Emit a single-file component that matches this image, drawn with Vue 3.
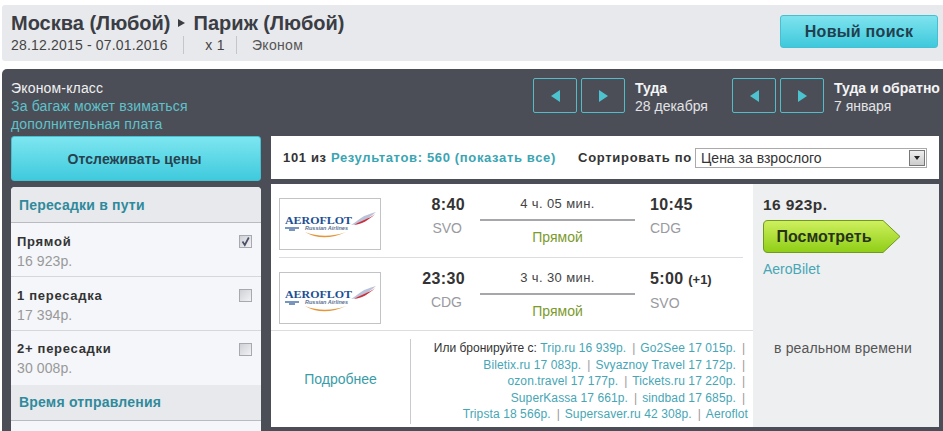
<template>
  <div class="page">
    <header class="topbar">
      <div class="route">
        <div class="route-title">Москва (Любой) <span class="route-arrow"></span> Париж (Любой)</div>
        <div class="route-meta">
          <span class="meta-dates">28.12.2015 - 07.01.2016</span>
          <span class="meta-pax">x 1</span>
          <span class="meta-class">Эконом</span>
        </div>
      </div>
      <button class="new-search">Новый поиск</button>
    </header>

    <section class="panel">
      <div class="panel-head">
        <div class="cabin">
          <div class="cabin-name">Эконом-класс</div>
          <div class="cabin-note">За багаж может взиматься<br>дополнительная плата</div>
        </div>
        <div class="date-nav">
          <div v-for="d in dates" :key="d.label" class="date-group" :class="d.cls">
            <button class="arrow-btn"><span class="tri tri-left"></span></button>
            <button class="arrow-btn"><span class="tri tri-right"></span></button>
            <div class="date-text">
              <b>{{ d.label }}</b>
              <span>{{ d.date }}</span>
            </div>
          </div>
        </div>
      </div>

      <div class="panel-body">
        <aside class="sidebar">
          <button class="track">Отслеживать цены</button>
          <div class="filters">
            <h4 class="filter-title">Пересадки в пути</h4>
            <div v-for="s in stops" :key="s.name" class="stop">
              <div>
                <div class="stop-name">{{ s.name }}</div>
                <div class="stop-price">{{ s.price }}</div>
              </div>
              <span class="check">
                <svg v-if="s.checked" width="11" height="11" viewBox="0 0 11 11">
                  <path d="M2.5 5.5 L4.8 9 L8.8 1.5" fill="none" stroke="#4a4f68" stroke-width="1.7" />
                </svg>
              </span>
            </div>
            <h4 class="filter-title">Время отправления</h4>
          </div>
        </aside>

        <main class="results">
          <div class="sortbar">
            <div class="count">101 из <span class="teal">Результатов: 560 (показать все)</span></div>
            <div class="sort">
              <span class="sort-label">Сортировать по</span>
              <div class="select">
                <span>Цена за взрослого</span>
                <span class="select-btn"><span class="select-tri"></span></span>
              </div>
            </div>
          </div>

          <div class="ticket">
            <div class="ticket-main">
              <div v-for="(f, i) in flights" :key="i" class="flight">
                <div class="logo">
                  <svg width="100" height="50" viewBox="0 0 100 50">
                    <text x="5" y="25" class="logo-word" textLength="67" lengthAdjust="spacingAndGlyphs">AEROFLOT</text>
                    <path d="M71 26 C80 25 88 20 96 13 C90 15 85 16 81 19 C77 22 74 24 71 26 Z" fill="#b9c2d8" />
                    <path d="M74 26 C82 25 89 21 95 15 C89 20 82 21 74 26 Z" fill="#c8303c" />
                    <path d="M5 29 L19 29" stroke="#1d4f91" stroke-width="1.2" />
                    <path d="M9 31 L15 31" stroke="#1d4f91" stroke-width="1.2" />
                    <text x="25" y="31" class="logo-sub" textLength="43" lengthAdjust="spacingAndGlyphs">Russian Airlines</text>
                    <path d="M25 33 C38 38 52 38 66 33 C52 40 36 40 25 33 Z" fill="#e8953a" />
                  </svg>
                </div>
                <div class="point">
                  <div class="time">{{ f.dep }}</div>
                  <div class="code">{{ f.from }}</div>
                </div>
                <div class="leg">
                  <div class="duration">{{ f.duration }}</div>
                  <div class="leg-line"></div>
                  <div class="direct">Прямой</div>
                </div>
                <div class="point point-arr">
                  <div class="time">{{ f.arr }} <small v-if="f.plus">(+1)</small></div>
                  <div class="code">{{ f.to }}</div>
                </div>
              </div>

              <div class="ticket-foot">
                <a class="more">Подробнее</a>
                <div class="others">
                  <div v-for="(line, i) in others" :key="i">
                    <span v-if="i === 0" class="others-lead">Или бронируйте с: </span>
                    <template v-for="(item, j) in line" :key="item">
                      <span class="teal-link">{{ item }}</span>
                      <span v-if="j < line.length - 1" class="pipe">|</span>
                    </template>
                    <span v-if="i < others.length - 1" class="pipe pipe-end">|</span>
                  </div>
                </div>
              </div>
            </div>

            <div class="ticket-side">
              <div class="price">16 923р.</div>
              <button class="view">
                <svg class="view-shape" width="138" height="33" viewBox="0 0 138 33">
                  <defs>
                    <linearGradient id="viewGrad" x1="0" y1="0" x2="0" y2="1">
                      <stop offset="0" stop-color="#cff05f" />
                      <stop offset="1" stop-color="#8fce16" />
                    </linearGradient>
                  </defs>
                  <path d="M5 .5 H120 L137 16.500 L120 32.500 H5 Q.5 32.500 .5 28 V5 Q.5 .5 5 .5 Z" fill="url(#viewGrad)" stroke="#6f9a1e" />
                </svg>
                <span class="view-label">Посмотреть</span>
              </button>
              <a class="agent">AeroBilet</a>
              <div class="realtime">в реальном времени</div>
            </div>
          </div>
        </main>
      </div>
    </section>
  </div>
</template>

<script setup>
const dates = [
  { label: 'Туда', date: '28 декабря', cls: 'date-out' },
  { label: 'Туда и обратно', date: '7 января', cls: 'date-back' },
]

const stops = [
  { name: 'Прямой', price: '16 923р.', checked: true },
  { name: '1 пересадка', price: '17 394р.', checked: false },
  { name: '2+ пересадки', price: '30 008р.', checked: false },
]

const flights = [
  { dep: '8:40', from: 'SVO', duration: '4 ч. 05 мин.', arr: '10:45', to: 'CDG', plus: false },
  { dep: '23:30', from: 'CDG', duration: '3 ч. 30 мин.', arr: '5:00', to: 'SVO', plus: true },
]

const others = [
  ['Trip.ru 16 939р.', 'Go2See 17 015р.'],
  ['Biletix.ru 17 083р.', 'Svyaznoy Travel 17 172р.'],
  ['ozon.travel 17 177р.', 'Tickets.ru 17 220р.'],
  ['SuperKassa 17 661р.', 'sindbad 17 685р.'],
  ['Tripsta 18 566р.', 'Supersaver.ru 42 308р.', 'Aeroflot'],
]
</script>

<style>
html, body { margin: 0; background: #fff; overflow: hidden; }
</style>

<style scoped>
.page {
  width: 943px; height: 431px; overflow: hidden;
  padding: 5px 0 0 2px; box-sizing: border-box;
  font-family: "Liberation Sans", Arial, sans-serif;
  color: #333;
}
button { font-family: inherit; padding: 0; cursor: pointer; }

.topbar {
  height: 56px; background: #e8e9ec; border-radius: 3px 0 0 3px;
  display: flex; justify-content: space-between; align-items: center;
  padding: 0 5px 0 9px;
}
.route-title { font-size: 20px; font-weight: 700; line-height: 23px; color: #3b3d45; }
.route-arrow {
  display: inline-block; vertical-align: 3px; margin: 0 3px 0 2px;
  border-left: 7px solid #3b3d45; border-top: 4px solid transparent; border-bottom: 4px solid transparent;
}
.route-meta { display: flex; font-size: 14px; line-height: 18px; color: #444; margin-top: 1px; }
.meta-dates { width: 172px; border-right: 1px solid #c5c6ca; letter-spacing: .18px; }
.meta-pax { width: 53px; border-right: 1px solid #c5c6ca; text-align: center; box-sizing: border-box; padding-left: 10px; letter-spacing: .3px; }
.meta-class { padding-left: 15px; color: #555; letter-spacing: .3px; }
.new-search {
  width: 158px; height: 33px; margin-top: -3px;
  border: 1px solid #46bfd0; border-radius: 3px;
  background: linear-gradient(#7fe3ee, #3ec9dc);
  color: #223f4e; font-size: 16px; font-weight: 700; letter-spacing: .3px;
}

.panel {
  margin-top: 8px; height: 362px; background: #4c4e57;
  border-radius: 5px 0 0 0;
}
.panel-head { height: 67px; display: flex; justify-content: space-between; }
.cabin { padding: 10px 0 0 9px; font-size: 14px; line-height: 18px; letter-spacing: .17px; }
.cabin-name { color: #f0f0f2; }
.cabin-note { color: #5fc2cb; }
.date-nav { display: flex; padding-top: 9px; }
.date-group { display: flex; }
.date-out { width: 199px; }
.date-back { width: 211px; }
.arrow-btn {
  width: 44px; height: 35px; margin-right: 4px;
  background: transparent; border: 1px solid #52bcc8; border-radius: 2px;
  display: flex; align-items: center; justify-content: center;
}
.tri { border-top: 6px solid transparent; border-bottom: 6px solid transparent; }
.tri-left { border-right: 9px solid #4dc3d0; }
.tri-right { border-left: 9px solid #4dc3d0; }
.date-text { display: flex; flex-direction: column; padding: 1px 0 0 6px; font-size: 14px; line-height: 18px; color: #e2e3e6; white-space: nowrap; }
.date-text b { color: #f4f4f6; }

.panel-body { display: flex; padding-left: 9px; height: 295px; }
.sidebar { width: 250px; flex: none; }
.track {
  display: block; width: 250px; height: 45px;
  border: 1px solid #46bfd0; border-radius: 3px;
  background: linear-gradient(#7de6f0, #3fcadd);
  color: #27424f; font-size: 14px; font-weight: 700; letter-spacing: .1px;
  padding-right: 3px;
}
.filters { margin-top: 6px; background: #f4f6fa; border-radius: 4px 4px 0 0; height: 244px; }
.filter-title {
  margin: 0; height: 35px; line-height: 35px; padding-left: 8px;
  background: #e7e9ec; color: #2f8a9c; font-size: 14px; font-weight: 700;
  border-bottom: 1px solid #b9bbc0; letter-spacing: .2px;
}
.filters .filter-title:first-child { border-radius: 4px 4px 0 0; line-height: 37px; }
.stop {
  height: 53px; border-bottom: 1px solid #d5d7db;
  display: flex; justify-content: space-between; padding: 0 9px 0 6px;
}
.stop:nth-child(4) { border-bottom: 0; height: 54px; }
.stop:nth-child(4) .stop-name { margin-top: 9px; }
.stop-name { font-size: 13px; font-weight: 700; color: #333; margin-top: 10px; line-height: 17px; letter-spacing: .72px; }
.stop-price { font-size: 14px; color: #999; line-height: 19px; margin-top: 2px; letter-spacing: .1px; }
.check {
  width: 11px; height: 11px; margin-top: 12px; border: 1px solid #a8a9b0;
  background: linear-gradient(135deg, #cfd0d6, #f2f2f4); display: block;
}
.check svg { display: block; }

.results { width: 668px; flex: none; margin-left: 10px; }
.sortbar {
  height: 43px; background: #fff; display: flex; align-items: center;
  justify-content: space-between; padding: 0 12px; box-sizing: border-box;
}
.count { font-size: 13px; font-weight: 700; color: #333; letter-spacing: .65px; white-space: nowrap; }
.teal { color: #3aa5b2; }
.sort { display: flex; align-items: center; }
.sort-label { font-size: 13px; font-weight: 700; letter-spacing: .7px; margin-right: 3px; white-space: nowrap; }
.select {
  width: 232px; height: 20px; border: 1px solid #aaa; box-sizing: border-box;
  display: flex; justify-content: space-between; align-items: center;
  font-size: 14px; line-height: 18px; padding-left: 5px; color: #333;
}
.select-btn {
  width: 16px; height: 16px; margin-right: 1px; border: 1px solid #777;
  background: linear-gradient(#eee, #ccc); display: flex; align-items: center; justify-content: center;
  box-sizing: border-box;
}
.select-tri { border-top: 4px solid #222; border-left: 3px solid transparent; border-right: 3px solid transparent; }

.ticket { margin-top: 5px; height: 243px; display: flex; background: #fff; }
.ticket-main { width: 482px; flex: none; }
.flight { height: 73px; display: flex; margin: 0 10px 0 8px; border-bottom: 1px solid #dcdde0; }
.flight:nth-child(2) { height: 72px; margin: 0; padding: 0 10px 0 8px; }
.logo {
  width: 100px; height: 50px; margin: 14px 0 0; border: 1px solid #c2c3c7; flex: none;
}
.logo svg { display: block; }
.logo-word { font-family: "Liberation Serif", serif; font-weight: 700; font-size: 10px; fill: #1c4e93; }
.logo-sub { font-family: "Liberation Sans", sans-serif; font-style: italic; font-weight: 700; font-size: 5.500px; fill: #5b7396; }
.point { width: 84px; text-align: right; flex: none; }
.point .code { padding-right: 3px; }
.point-arr { width: 90px; text-align: left; margin-left: 15px; }
.point-arr .code { padding-right: 0; }
.time { font-size: 16px; font-weight: 700; color: #333; margin-top: 11px; line-height: 19px; letter-spacing: .35px; white-space: nowrap; }
.time small { font-size: 13px; letter-spacing: 0; }
.code { font-size: 14px; color: #9a9a9f; margin-top: 6px; line-height: 17px; }
.leg { width: 155px; margin-left: 15px; text-align: center; flex: none; }
.duration { font-size: 13px; color: #444; margin-top: 11px; line-height: 18px; letter-spacing: .4px; }
.leg-line { height: 2px; background: #a6a7ab; margin-top: 6px; }
.direct { font-size: 14px; color: #7d9a2d; margin-top: 8px; line-height: 17px; }
.ticket-foot { height: 96px; display: flex; }
.more { width: 139px; flex: none; text-align: center; font-size: 14px; color: #3a9ca8; padding-top: 40px; box-sizing: border-box; }
.others {
  flex: 1; margin: 8px 0 0; height: 85px; border-left: 1px solid #c9cacd;
  padding: 1px 5px 0 0; text-align: right; font-size: 12px; line-height: 16.600px; box-sizing: border-box;
  white-space: nowrap;
}
.others-lead { color: #333; }
.teal-link { color: #46a6b5; letter-spacing: .1px; }
.pipe { color: #999; margin: 0 5px 0 6px; }
.pipe-end { margin-right: 3px; }

.ticket-side { flex: 1; background: #eeeff1; padding: 11px 0 0 10px; box-sizing: border-box; }
.price { font-size: 15.500px; font-weight: 700; color: #333; line-height: 20px; letter-spacing: .4px; }
.view { position: relative; display: block; width: 138px; height: 33px; margin-top: 5px; border: 0; background: none; }
.view-shape { position: absolute; left: 0; top: 0; }
.view-label { position: relative; display: block; width: 122px; text-align: center; font-size: 16px; font-weight: 700; color: #28331a; line-height: 33px; }
.agent { display: block; margin-top: 7px; font-size: 14px; line-height: 18px; color: #46a6b5; }
.realtime { margin: 61px 0 0 11px; font-size: 14px; line-height: 18px; color: #555; letter-spacing: .15px; }
</style>
